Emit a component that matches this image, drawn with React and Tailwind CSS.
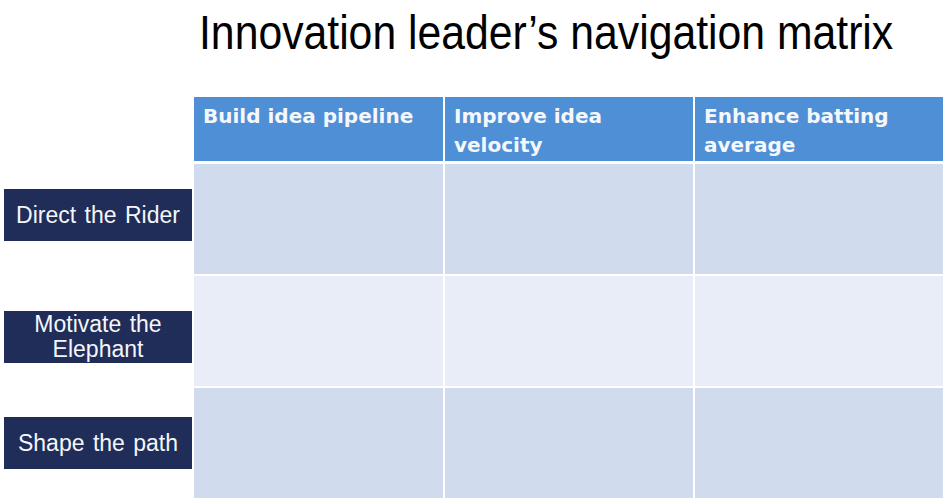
import React from "react";

const headers = ["Build idea pipeline", "Improve idea velocity", "Enhance batting average"];

const rows = [
  { label: ["Direct the Rider"], bg: "bg-[#d0dbee]", shift: "-mt-[8px]" },
  { label: ["Motivate the", "Elephant"], bg: "bg-[#e8edf7]", shift: "mt-[12px]" },
  { label: ["Shape the path"], bg: "bg-[#d0dbee]", shift: "mt-0" },
];

export default function App() {
  return (
    <div className="w-[952px] h-[504px] bg-white overflow-hidden relative">
      {/* Title */}
      <div className="h-[97px] pl-[199px] pt-[4px]">
        <h1
          className="text-[48px] leading-[58px] text-black origin-left scale-x-[0.89] whitespace-nowrap"
          style={{ fontFamily: '"Liberation Sans", Arial, sans-serif' }}
        >
          Innovation leader’s navigation matrix
        </h1>
      </div>

      {/* Matrix */}
      <div className="grid grid-cols-[192px_249px_248px_248px] grid-rows-[65px_110px_110px_110px] gap-x-[2px] gap-y-[2px]">
        <div />
        {headers.map((h) => (
          <div
            key={h}
            className="bg-[#4f8fd6] text-[#f4f8fd] font-bold text-[20px] leading-[29px] pl-[9px] pr-[8px] pt-[5px] border-b-[1px] border-white"
            style={{ fontFamily: '"DejaVu Sans", Tahoma, sans-serif' }}
          >
            {h}
          </div>
        ))}

        {rows.map((r, i) => (
          <React.Fragment key={i}>
            <div className="flex items-center pl-[4px]">
              <div
                className={`w-full h-[52px] bg-[#1f2d58] text-[#f4f6fb] flex flex-col items-center justify-center text-[23px] leading-[25px] ${r.shift}`}
                style={{ fontFamily: '"Liberation Sans", Arial, sans-serif', wordSpacing: "2px" }}
              >
                {r.label.map((t) => (
                  <span key={t}>{t}</span>
                ))}
              </div>
            </div>
            <div className={r.bg} />
            <div className={r.bg} />
            <div className={r.bg} />
          </React.Fragment>
        ))}
      </div>
    </div>
  );
}
